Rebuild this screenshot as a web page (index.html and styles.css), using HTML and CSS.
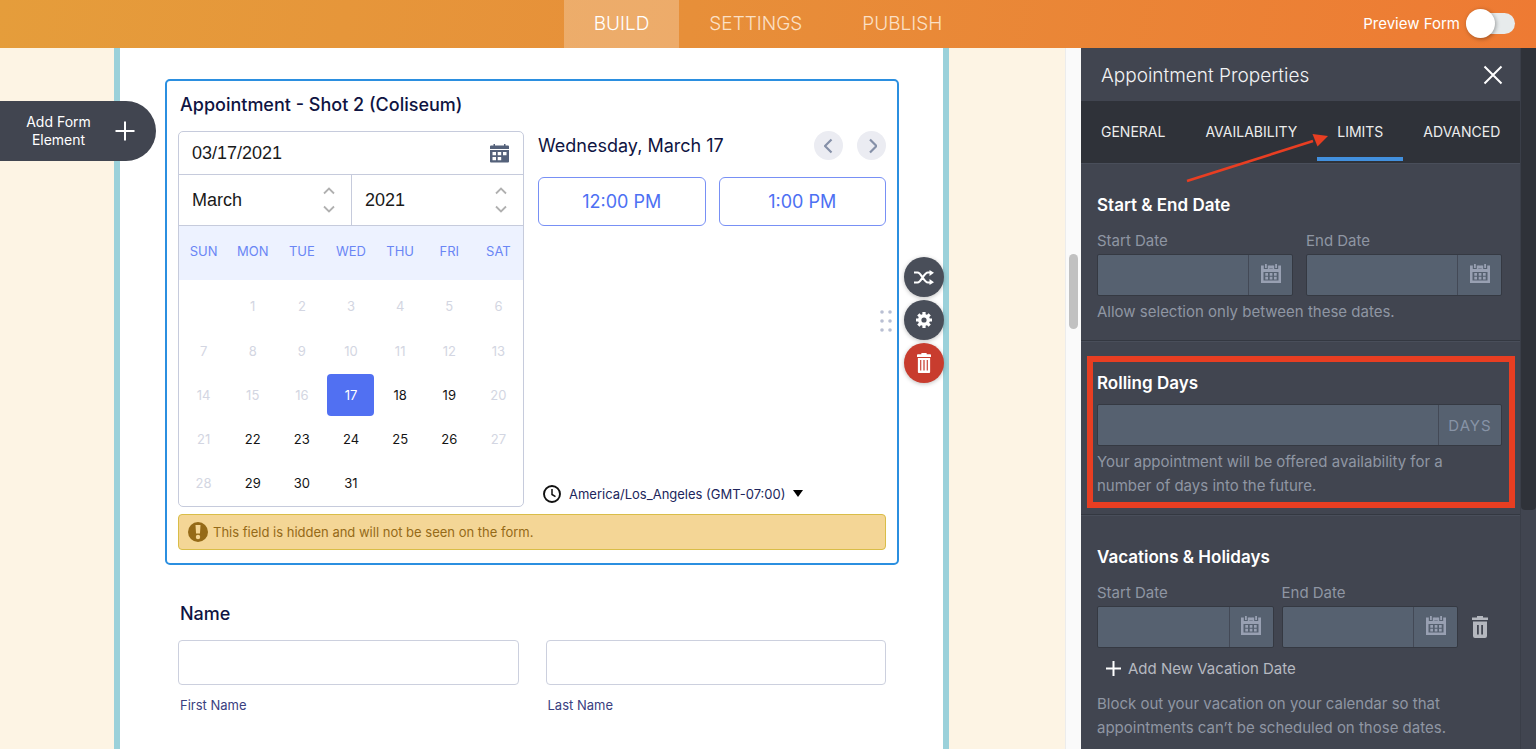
FILE: index.html
```html
<!DOCTYPE html>
<html lang="en">
<head>
<meta charset="utf-8">
<title>Form Builder</title>
<link rel="stylesheet" href="styles.css">
</head>
<body>
<svg class="sprite" aria-hidden="true">
  <symbol id="i-cal" viewBox="0 0 20 19">
    <path fill="currentColor" fill-rule="evenodd" d="M0 1.500h2.800V5h4V1.500h1.500V5h3.400V1.500h1.500V5h4V1.500H20V19H0zM2.500 8v8.500h15V8z"/>
    <path fill="currentColor" d="M4 0h1.800v4H4zM8 1.500h4v3H8zM14.200 0H16v4h-1.800zM4.300 9h2.700v2.700H4.300zM8.700 9h2.700v2.700H8.700zM13 9h2.700v2.700H13zM4.300 12.800h2.700v2.700H4.300zM8.700 12.800h2.700v2.700H8.700zM13 12.800h2.700v2.700H13z"/>
  </symbol>
  <symbol id="i-updown" viewBox="0 0 12 26">
    <path fill="none" stroke="#b0b0b0" stroke-width="1.800" d="M1 6.500l5-5 5 5M1 19.500l5 5 5-5"/>
  </symbol>
</svg>

<header class="topbar">
  <nav class="topnav">
    <a class="topnav-link is-active" href="#build">BUILD</a>
    <a class="topnav-link" href="#settings">SETTINGS</a>
    <a class="topnav-link" href="#publish">PUBLISH</a>
  </nav>
  <label class="preview">Preview Form
    <input class="switch" type="checkbox">
  </label>
</header>

<div class="workspace">
  <main class="canvas">
    <button class="add-element" type="button">
      <span class="add-label">Add Form Element</span>
      <svg class="add-plus" viewBox="0 0 20 20"><path d="M10 .5v19M.5 10h19" stroke="#fff" stroke-width="2"/></svg>
    </button>

    <form class="page">
      <section class="card">
        <h2 class="field-title">Appointment - Shot 2 (Coliseum)</h2>
        <div class="appointment">
          <div class="calendar">
            <div class="date-row">
              <input class="date-input" type="text" value="03/17/2021" aria-label="Date">
              <svg class="date-icon" viewBox="0 0 19 19"><path fill="#54617a" fill-rule="evenodd" d="M0 2.500Q0 1.500 1 1.500h2.500V0H5v1.500h9V0h1.500v1.500H18q1 0 1 1V5H0zM0 6h19v11.500q0 1-1 1H1q-1 0-1-1zM2.500 8v3.200h3.500V8zM7.700 8v3.200h3.500V8zM13 8v3.200h3.500V8zM2.500 13v3.200h3.500V13zM7.700 13v3.200h3.500V13z"/></svg>
            </div>
            <div class="select-row">
              <div class="select-wrap">
                <select class="cal-select" aria-label="Month"><option>March</option></select>
                <svg class="updown"><use href="#i-updown"/></svg>
              </div>
              <div class="select-wrap">
                <select class="cal-select" aria-label="Year"><option>2021</option></select>
                <svg class="updown"><use href="#i-updown"/></svg>
              </div>
            </div>
            <table class="days">
              <thead><tr><th>SUN</th><th>MON</th><th>TUE</th><th>WED</th><th>THU</th><th>FRI</th><th>SAT</th></tr></thead>
              <tbody>
                <tr><td></td><td>1</td><td>2</td><td>3</td><td>4</td><td>5</td><td>6</td></tr>
                <tr><td>7</td><td>8</td><td>9</td><td>10</td><td>11</td><td>12</td><td>13</td></tr>
                <tr><td>14</td><td>15</td><td>16</td><td><button type="button" class="day is-selected">17</button></td><td><button type="button" class="day">18</button></td><td><button type="button" class="day">19</button></td><td>20</td></tr>
                <tr><td>21</td><td><button type="button" class="day">22</button></td><td><button type="button" class="day">23</button></td><td><button type="button" class="day">24</button></td><td><button type="button" class="day">25</button></td><td><button type="button" class="day">26</button></td><td>27</td></tr>
                <tr><td>28</td><td><button type="button" class="day">29</button></td><td><button type="button" class="day">30</button></td><td><button type="button" class="day">31</button></td><td></td><td></td><td></td></tr>
              </tbody>
            </table>
          </div>

          <div class="slots">
            <div class="slots-head">
              <span class="slots-date">Wednesday, March 17</span>
              <button class="round" type="button" aria-label="Previous day"><svg class="chev" viewBox="0 0 10 16"><path d="M7.500 1.500L1 8l6.500 6.500"/></svg></button>
              <button class="round" type="button" aria-label="Next day"><svg class="chev" viewBox="0 0 10 16"><path d="M3 1.500L9.500 8 3 14.500"/></svg></button>
            </div>
            <div class="slot-grid">
              <button class="slot" type="button">12:00 PM</button>
              <button class="slot" type="button">1:00 PM</button>
            </div>
            <div class="timezone">
              <svg class="clock" viewBox="0 0 18 18"><circle cx="9" cy="9" r="8" fill="none" stroke="#111" stroke-width="1.900"/><path d="M9 4v5.500l3.500 2.200" fill="none" stroke="#111" stroke-width="1.500"/></svg>
              <select class="tz-select" aria-label="Time zone"><option>America/Los_Angeles (GMT-07:00)</option></select>
              <svg class="caret" viewBox="0 0 10 7"><path d="M0 0h10L5 7z"/></svg>
            </div>
          </div>
        </div>

        <p class="notice">
          <svg class="notice-icon" viewBox="0 0 20 20"><circle cx="10" cy="10" r="10" fill="#956a18"/><path d="M7.500 3h5l-.5 8.500H8z" fill="#f5d695"/><circle cx="10" cy="15" r="2.200" fill="#f5d695"/></svg>
          This field is hidden and will not be seen on the form.
        </p>

        <svg class="grip" viewBox="0 0 12 22" fill="#b9bfd3"><circle cx="2" cy="2" r="1.800"/><circle cx="10" cy="2" r="1.800"/><circle cx="2" cy="11" r="1.800"/><circle cx="10" cy="11" r="1.800"/><circle cx="2" cy="20" r="1.800"/><circle cx="10" cy="20" r="1.800"/></svg>
        <div class="actions">
          <button class="action" type="button" aria-label="Conditions">
            <svg width="20" height="15" viewBox="0 0 20 15"><path d="M0 2.500h3.500c4 0 6 10 10.500 10h2.500M0 12.500h3.500c4 0 6-10 10.500-10h2.500" fill="none" stroke="#fff" stroke-width="2.200"/><path d="M15.500 0L20 2.800l-4.500 3.200zM15.500 9L20 12.200 15.500 15z" fill="#fff"/></svg>
          </button>
          <button class="action" type="button" aria-label="Properties">
            <svg width="16" height="16" viewBox="0 0 16 16"><circle cx="8" cy="8" r="4.300" fill="none" stroke="#fff" stroke-width="3.400"/><path d="M8 0v3M8 13v3M0 8h3M13 8h3M2.300 2.300l2 2M11.700 11.700l2 2M13.700 2.300l-2 2M4.300 11.700l-2 2" stroke="#fff" stroke-width="3.200"/></svg>
          </button>
          <button class="action is-danger" type="button" aria-label="Delete">
            <svg width="14" height="20" viewBox="0 0 16 20" preserveAspectRatio="none"><path fill="#fff" fill-rule="evenodd" d="M5 0h6v1.200h4q1 0 1 1V4H0V2.200q0-1 1-1h4zM1 5h14v14q0 1-1 1H2q-1 0-1-1zM3.600 7v10.500h1.300V7zM7.300 7v10.500h1.400V7zM11.100 7v10.500h1.300V7z"/></svg>
          </button>
        </div>
      </section>

      <fieldset class="name-field">
        <legend class="field-title name-title">Name</legend>
        <div class="name-grid">
          <div class="name-col"><input class="text-input" id="first" type="text"><label for="first">First Name</label></div>
          <div class="name-col"><input class="text-input" id="last" type="text"><label for="last">Last Name</label></div>
        </div>
      </fieldset>
    </form>
  </main>

  <div class="scroll-track"><div class="scroll-thumb"></div></div>

  <aside class="panel">
    <div class="panel-main">
      <div class="panel-head">
        <h1 class="panel-title">Appointment Properties</h1>
        <button class="close" type="button" aria-label="Close"><svg width="20" height="20" viewBox="0 0 20 20"><path d="M1.500 1.500l17 17M18.500 1.500l-17 17" stroke="#fff" stroke-width="2"/></svg></button>
      </div>
      <nav class="tabs">
        <a class="tab" href="#general">GENERAL</a>
        <a class="tab" href="#availability">AVAILABILITY</a>
        <a class="tab is-active" href="#limits">LIMITS</a>
        <a class="tab" href="#advanced">ADVANCED</a>
      </nav>

      <section class="group">
        <h2 class="group-title">Start &amp; End Date</h2>
        <div class="date-pair">
          <div class="date-field">
            <label for="s1">Start Date</label>
            <div class="combo"><input id="s1" type="text"><button type="button" class="addon" aria-label="Pick start date"><svg class="cal"><use href="#i-cal"/></svg></button></div>
          </div>
          <div class="date-field">
            <label for="e1">End Date</label>
            <div class="combo"><input id="e1" type="text"><button type="button" class="addon" aria-label="Pick end date"><svg class="cal"><use href="#i-cal"/></svg></button></div>
          </div>
        </div>
        <p class="help">Allow selection only between these dates.</p>
      </section>

      <section class="group group-rolling">
        <h2 class="group-title"><label for="rolling">Rolling Days</label></h2>
        <div class="combo"><input id="rolling" type="text"><span class="addon addon-text">DAYS</span></div>
        <p class="help">Your appointment will be offered availability for a number of days into the future.</p>
        <div class="highlight"></div>
      </section>

      <section class="group">
        <h2 class="group-title">Vacations &amp; Holidays</h2>
        <div class="date-pair vacation">
          <div class="date-field">
            <label for="s2">Start Date</label>
            <div class="combo"><input id="s2" type="text"><button type="button" class="addon" aria-label="Pick start date"><svg class="cal"><use href="#i-cal"/></svg></button></div>
          </div>
          <div class="date-field">
            <label for="e2">End Date</label>
            <div class="combo"><input id="e2" type="text"><button type="button" class="addon" aria-label="Pick end date"><svg class="cal"><use href="#i-cal"/></svg></button></div>
          </div>
          <button class="remove" type="button" aria-label="Remove"><svg width="16" height="22" viewBox="0 0 16 22"><path fill="#b4b7be" fill-rule="evenodd" d="M5 0h6v1.500h5V4H0V1.500h5zM1 5.500h14V20q0 2-2 2H3q-2 0-2-2zM5 9v9.500h1.800V9zM9.200 9v9.500H11V9z"/></svg></button>
        </div>
        <button class="add-date" type="button"><svg width="15" height="15" viewBox="0 0 15 15"><path d="M7.500 0v15M0 7.500h15" stroke="#fff" stroke-width="2"/></svg>Add New Vacation Date</button>
        <p class="help">Block out your vacation on your calendar so that appointments can’t be scheduled on those dates.</p>
      </section>
    </div>
    <div class="panel-track"><div class="panel-thumb"></div></div>
    <svg class="pointer" width="148" height="54" viewBox="0 0 148 54"><path d="M6 49L132 9" stroke="#e83e22" stroke-width="2.600"/><path d="M147 4L131.500 2l5 12.500z" fill="#e83e22"/></svg>
  </aside>
</div>
</body>
</html>
```
FILE: styles.css
```css
* { box-sizing: border-box; }
body {
  margin: 0;
  height: 100vh;
  display: flex;
  flex-direction: column;
  overflow: hidden;
  font-family: Inter, "Open Sans", sans-serif;
  font-size: 15px;
  color: #0f1442;
}
button, input, select { font: inherit; color: inherit; margin: 0; padding: 0; border: 0; background: none; }
button { cursor: pointer; }
a { color: inherit; text-decoration: none; }
h1, h2, p { margin: 0; }
svg { display: block; flex: none; }
.sprite { position: absolute; width: 0; height: 0; }

/* Top bar */
.topbar {
  flex: none;
  height: 48px;
  display: grid;
  grid-template-columns: 1fr auto 1fr;
  background: linear-gradient(100deg, #e59d3b, #e78f39 45%, #ee7a33);
  color: #fff;
}
.topnav { grid-column: 2; display: flex; }
.topnav-link {
  padding: 0 30px;
  line-height: 48px;
  font-size: 19px;
  font-weight: 300;
  color: #fbe0c6;
}
.topnav-link.is-active { background: rgba(255, 255, 255, .25); color: #fff; }
.preview {
  justify-self: end;
  display: flex;
  align-items: center;
  gap: 6px;
  padding-right: 21px;
  height: 46px;
}
.switch {
  appearance: none;
  position: relative;
  width: 49px;
  height: 21px;
  border-radius: 11px;
  background: #e7ebec;
}
.switch::before {
  content: "";
  position: absolute;
  left: 0;
  top: -4px;
  width: 29px;
  height: 29px;
  border-radius: 50%;
  background: #fff;
  box-shadow: 1px 1px 4px rgba(0, 0, 0, .35);
}

/* Workspace */
.workspace { flex: 1; min-height: 0; display: grid; grid-template-columns: minmax(0, 1fr) 16px 455px; }
.canvas { position: relative; background: #fdf4e4; overflow: hidden; padding-right: 2px; }
.scroll-track { background: #fafafa; border-left: 1px solid #ececec; padding: 206px 3px 0; }
.scroll-thumb { height: 75px; width: 9px; border-radius: 5px; background: #c1c1c1; }

.add-element {
  position: absolute;
  left: 0;
  top: 53px;
  display: flex;
  align-items: center;
  gap: 14px;
  height: 60px;
  width: 156px;
  padding-left: 16px;
  border-radius: 0 30px 30px 0;
  background: #414550;
  color: #fff;
  font-size: 14px;
  line-height: 18px;
}
.add-label { width: 85px; }
.add-plus { width: 20px; height: 20px; }

.page {
  max-width: 835px;
  min-height: 100%;
  margin: 0 auto;
  padding: 31px 44px 40px 45px;
  background: #fff;
  border: solid #9bd1da;
  border-width: 0 6px;
}
.card {
  position: relative;
  padding: 0 11px 13px;
  border: 2px solid #2b8fe0;
  border-radius: 5px;
}
.field-title { padding: 0 2px; font-size: 18px; font-weight: 500; line-height: 48px; margin-bottom: 2px; }
.appointment { display: grid; grid-template-columns: 346fr 348fr; gap: 14px; }

/* Calendar */
.calendar { border: 1px solid #c6cbdc; border-radius: 5px; overflow: hidden; height: 376px; }
.date-row, .select-wrap { position: relative; font-family: "Liberation Sans", Arial, sans-serif; font-size: 18px; color: #1a1a1a; }
.date-row { display: flex; align-items: center; padding: 0 14px 0 13px; height: 42px; }
.date-input { flex: 1; min-width: 0; }
.date-icon { width: 19px; height: 19px; }
.select-row { display: grid; grid-template-columns: 1fr 1fr; border: solid #c6cbdc; border-width: 1px 0; }
.select-wrap + .select-wrap { border-left: 1px solid #c6cbdc; }
.cal-select { appearance: none; width: 100%; height: 50px; padding: 0 13px; }
.updown { position: absolute; right: 16px; top: 12px; width: 12px; height: 26px; pointer-events: none; }
.days { width: 100%; table-layout: fixed; border-collapse: collapse; font-size: 13px; text-align: center; color: #d3d6e2; }
.days th { height: 54px; padding: 0 0 4px; background: #edf2ff; color: #6a86f5; font-weight: 400; }
.days td { height: 44px; padding: 0; }
.days tbody tr:first-child td { height: 49px; padding-top: 2px; }
.day { width: 100%; height: 42px; border-radius: 4px; color: #141414; }
.day.is-selected { width: 47px; background: #5170f2; color: #fff; }

/* Time slots */
.slots { display: flex; flex-direction: column; }
.slots-head { display: flex; align-items: center; gap: 14px; height: 29px; }
.slots-date { flex: 1; font-size: 18px; }
.round { width: 29px; height: 29px; border-radius: 50%; background: #ebecf2; display: grid; place-items: center; }
.chev { width: 10px; height: 16px; fill: none; stroke: #8590a8; stroke-width: 2.2; }
.slot-grid { display: grid; grid-template-columns: 1fr 1fr; gap: 13px; margin-top: 17px; }
.slot { height: 49px; border: 1px solid #7890f5; border-radius: 6px; color: #4d70f3; font-size: 18px; }
.timezone { display: flex; align-items: center; gap: 7px; margin-top: auto; padding: 0 5px 4px; font-size: 13px; color: #20265c; height: 23px; }
.clock { width: 18px; height: 18px; margin-right: 1px; }
.tz-select { appearance: none; }
.caret { width: 10px; height: 7px; }

.notice {
  display: flex;
  align-items: center;
  gap: 5px;
  margin-top: 7px;
  height: 36px;
  padding: 0 9px;
  border: 1px solid #d9bd48;
  border-radius: 4px;
  background: #f4d696;
  color: #956a18;
  font-size: 13px;
}
.notice-icon { width: 20px; height: 20px; }
.grip { position: absolute; right: 5px; top: 229px; width: 12px; height: 22px; }
.actions { position: absolute; right: -47px; top: 176px; display: grid; gap: 3px; }
.action {
  width: 40px;
  height: 40px;
  border-radius: 50%;
  background: #494e59;
  display: grid;
  place-items: center;
  box-shadow: 0 1px 4px rgba(0, 0, 0, .25);
}
.action.is-danger { background: #c83c2e; }

/* Name field */
.name-field { margin: 0; padding: 25px 13px 0; border: 0; min-width: 0; }
.name-title { float: left; width: 100%; }
.name-grid { clear: both; display: grid; grid-template-columns: 1fr 1fr; gap: 27px; }
.name-col { display: grid; gap: 11px; font-size: 13px; color: #3a4080; }
.name-col label { padding: 0 2px; line-height: 18px; }
.text-input { width: 100%; min-width: 0; height: 45px; border: 1px solid #ccd0de; border-radius: 4px; }

/* Properties panel */
.panel { position: relative; display: grid; grid-template-columns: minmax(0, 1fr) 16px; background: #414550; color: #8f96a3; overflow: hidden; }
.panel-track { border-left: 1px solid #3a3e48; }
.panel-thumb { height: 462px; background: #2f3239; border-radius: 0 0 4px 4px; }
.panel-head { display: flex; align-items: center; justify-content: space-between; height: 53px; padding: 0 17px 0 20px; }
.panel-title { font-size: 19px; font-weight: 300; line-height: 24px; padding-top: 2px; color: #f2f3f5; }
.tabs { display: flex; height: 62px; background: #2f3239; color: #eceded; font-size: 14px; }
.tab { padding: 0 20px; line-height: 62px; height: 60px; }
.tab.is-active { border-bottom: 4px solid #4290de; }
.group { position: relative; padding: 28px 18px 16px 16px; border-bottom: 1px solid #343841; border-top: 1px solid #494e5a; }
.group-title { font-size: 17px; font-weight: 600; line-height: 26px; color: #fff; margin-bottom: 10px; }
.date-pair { display: flex; gap: 13px; }
.date-field { flex: 1; min-width: 0; }
.date-field label { display: block; line-height: 26px; }
.combo { display: flex; height: 42px; border: 1px solid #353942; border-radius: 2px; background: #566170; }
.combo input { flex: 1; min-width: 0; }
.addon { width: 44px; border-left: 1px solid #434956; padding-bottom: 3px; display: grid; place-items: center; color: #98a0b2; }
.addon-text { width: 63px; padding: 0; color: #8793a6; letter-spacing: 1px; }
.cal { width: 20px; height: 19px; }
.help { margin-top: 4px; padding-right: 12px; line-height: 24px; }
.group-rolling .group-title { margin-bottom: 8px; }
.highlight { position: absolute; inset: 14px 5px 6px 6px; border: 6px solid #e83e22; pointer-events: none; }
.vacation { gap: 8px; }
.remove { width: 44px; margin-left: -8px; padding-top: 26px; display: grid; place-items: center; }
.add-date { display: flex; align-items: center; gap: 7px; height: 40px; padding-left: 9px; color: #b6b9c0; }
.pointer { position: absolute; left: 100px; top: 84px; pointer-events: none; }
```
